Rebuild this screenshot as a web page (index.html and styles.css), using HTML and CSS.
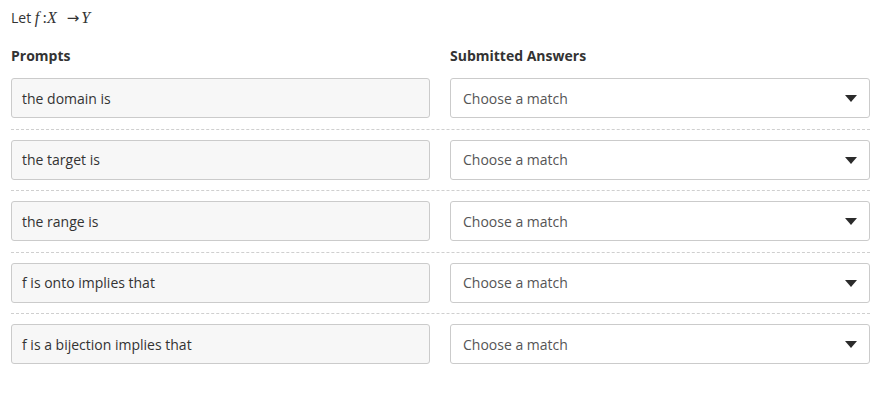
FILE: index.html
```html
<!DOCTYPE html>
<html>
<head>
<meta charset="utf-8">
<link rel="stylesheet" href="styles.css">
</head>
<body>
<div class="page">
  <p class="intro">Let <span class="math"><i>f</i>&thinsp;:<i>X</i><span class="arrow">&rarr;</span><i>Y</i></span></p>
  <div class="headers">
    <div class="head">Prompts</div>
    <div class="head">Submitted Answers</div>
  </div>
  <div class="row">
    <div class="prompt">the domain is</div>
    <div class="select"><span>Choose a match</span><span class="caret"></span></div>
  </div>
  <div class="row">
    <div class="prompt">the target is</div>
    <div class="select"><span>Choose a match</span><span class="caret"></span></div>
  </div>
  <div class="row">
    <div class="prompt">the range is</div>
    <div class="select"><span>Choose a match</span><span class="caret"></span></div>
  </div>
  <div class="row">
    <div class="prompt">f is onto implies that</div>
    <div class="select"><span>Choose a match</span><span class="caret"></span></div>
  </div>
  <div class="row last">
    <div class="prompt">f is a bijection implies that</div>
    <div class="select"><span>Choose a match</span><span class="caret"></span></div>
  </div>
</div>
</body>
</html>
```
FILE: styles.css
```css
html, body {
  margin: 0;
  padding: 0;
  background: #fff;
}
body {
  font-family: "Open Sans", "Liberation Sans", sans-serif;
  color: #333;
}
.page {
  padding: 8px 13px 0 11px;
}
.intro {
  margin: 0;
  font-size: 14px;
  line-height: 20px;
  color: #333;
}
.math {
  font-family: "Liberation Serif", "DejaVu Serif", serif;
  font-size: 16px;
}
.arrow {
  font-family: "DejaVu Sans", sans-serif;
  font-style: normal;
  font-size: 15px;
  margin: 0 2px 0 10px;
}
.headers {
  display: grid;
  grid-template-columns: 419px 420px;
  column-gap: 20px;
  margin-top: 18px;
  margin-bottom: 12px;
}
.head {
  font-size: 14px;
  font-weight: 700;
  line-height: 20px;
  color: #333;
}
.row {
  display: grid;
  grid-template-columns: 419px 420px;
  column-gap: 20px;
  padding-bottom: 10.5px;
  border-bottom: 1px dashed #cfcfcf;
  margin-bottom: 10px;
}
.row.last {
  border-bottom: none;
}
.prompt, .select {
  box-sizing: border-box;
  height: 40px;
  border: 1px solid #cbcbcb;
  border-radius: 3px;
  font-size: 14px;
  display: flex;
  align-items: center;
  padding: 0 11px;
}
.prompt {
  background: #f7f7f7;
  color: #333;
  padding-left: 10px;
}
.select {
  background: #fff;
  color: #555;
  justify-content: space-between;
  padding-left: 12px;
  padding-right: 12px;
}
.caret {
  width: 0;
  height: 0;
  border-left: 6px solid transparent;
  border-right: 6px solid transparent;
  border-top: 7px solid #2b2b2b;
  margin-top: 1px;
}
```
